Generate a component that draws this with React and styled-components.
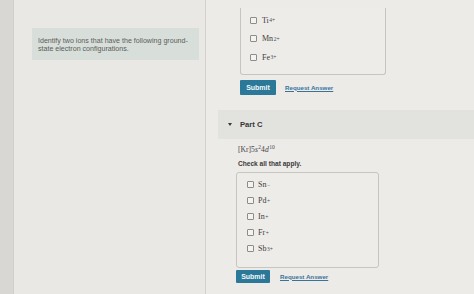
import React from "react";
import styled, { createGlobalStyle } from "styled-components";

const GlobalStyle = createGlobalStyle`
  html, body {
    margin: 0;
    padding: 0;
    width: 474px;
    height: 294px;
    overflow: hidden;
    background: #ecebe8;
  }
`;

const Page = styled.div`
  display: flex;
  width: 474px;
  height: 294px;
  font-family: "Liberation Sans", Arial, sans-serif;
`;

const Strip = styled.div`
  width: 13px;
  background: #d8d7d3;
  border-right: 1px solid #d0cfcb;
`;

const LeftPanel = styled.div`
  width: 167px;
  padding: 28px 6px 0 18px;
  background: #e9e8e4;
`;

const Prompt = styled.div`
  background: #d8dfda;
  padding: 9px 6px 6px 6px;
  height: 17px;
  font-size: 7.1px;
  line-height: 8px;
  color: #5b5c5b;
`;

const RightPanel = styled.div`
  flex: 1;
  border-left: 1px solid #d2d1cd;
  background: #ecebe8;
`;

const Section = styled.div`
  padding-left: ${(p) => p.indent}px;
  padding-top: ${(p) => p.top || 0}px;
`;

const AnswerBox = styled.div`
  width: ${(p) => p.width}px;
  margin-left: ${(p) => p.shift || 0}px;
  margin-top: ${(p) => p.top || 0}px;
  padding: ${(p) => p.pad};
  border: 1px solid #c6c5c1;
  border-top: ${(p) => (p.cut ? "none" : "1px solid #c6c5c1")};
  border-radius: ${(p) => (p.cut ? "0 0 3px 3px" : "3px")};
  box-sizing: border-box;
  background: #edece9;
`;

const Item = styled.div`
  display: flex;
  align-items: center;
  height: ${(p) => p.h}px;
  padding-left: ${(p) => p.inset}px;
  font-family: "Liberation Serif", "Times New Roman", serif;
  font-size: 8px;
  color: #3d3d3d;
`;

const Check = styled.span`
  width: 5px;
  height: 5px;
  border: 1px solid #8c8c8a;
  border-radius: 1px;
  background: #f3f3f1;
  margin-right: ${(p) => p.gap}px;
`;

const Sup = styled.sup`
  font-size: 5.5px;
  vertical-align: 3px;
  line-height: 0;
  margin-left: 0.5px;
  color: #4a4a4a;
`;

const Actions = styled.div`
  display: flex;
  align-items: center;
  margin-top: ${(p) => p.top}px;
  margin-left: ${(p) => p.shift || 0}px;
`;

const SubmitButton = styled.button`
  width: ${(p) => p.w}px;
  height: ${(p) => p.h}px;
  padding: 0;
  border: none;
  border-radius: 1px;
  background: #2b7898;
  color: #f4f8fa;
  font-family: "Liberation Sans", Arial, sans-serif;
  font-size: 7px;
  font-weight: bold;
`;

const RequestLink = styled.a`
  margin-left: ${(p) => p.gap}px;
  font-size: 6.2px;
  font-weight: bold;
  color: #3a739a;
  text-decoration: underline;
`;

const PartBar = styled.div`
  display: flex;
  align-items: center;
  height: 29px;
  margin: 15px 0 0 12px;
  padding-left: 10px;
  background: #e2e2df;
  font-size: 7.6px;
  font-weight: bold;
  color: #363636;
`;

const Caret = styled.span`
  width: 0;
  height: 0;
  border-left: 2.5px solid transparent;
  border-right: 2.5px solid transparent;
  border-top: 3px solid #3a3a3a;
  margin-right: 8px;
`;

const Formula = styled.div`
  margin-top: 6px;
  height: 9px;
  font-family: "Liberation Serif", "Times New Roman", serif;
  font-size: 7.6px;
  line-height: 9px;
  color: #444;
`;

const Instruction = styled.div`
  margin-top: 6px;
  font-size: 6.6px;
  font-weight: bold;
  color: #3a3a3a;
`;

const partB = [
  ["Ti", "4+"],
  ["Mn", "2+"],
  ["Fe", "3+"],
];

const partC = [
  ["Sn", "−"],
  ["Pd", "+"],
  ["In", "+"],
  ["Fr", "+"],
  ["Sb", "3+"],
];

export default function App() {
  return (
    <Page>
      <GlobalStyle />
      <Strip />
      <LeftPanel>
        <Prompt>
          Identify two ions that have the following ground-state electron
          configurations.
        </Prompt>
      </LeftPanel>
      <RightPanel>
        <Section indent={34} top={8}>
          <AnswerBox width={146} pad="3px 0 7px 0" cut>
            {partB.map(([el, ch]) => (
              <Item key={el} h={18.5} inset={9}>
                <Check gap={5} />
                {el}
                <Sup>{ch}</Sup>
              </Item>
            ))}
          </AnswerBox>
          <Actions top={5}>
            <SubmitButton w={36} h={15}>
              Submit
            </SubmitButton>
            <RequestLink gap={9}>Request Answer</RequestLink>
          </Actions>
        </Section>
        <PartBar>
          <Caret />
          Part C
        </PartBar>
        <Section indent={32}>
          <Formula>
            [Kr]5<i>s</i>
            <Sup>2</Sup>4<i>d</i>
            <Sup>10</Sup>
          </Formula>
          <Instruction>Check all that apply.</Instruction>
          <AnswerBox width={143} shift={-2} top={5} pad="4px 0 10px 0">
            {partC.map(([el, ch]) => (
              <Item key={el} h={16} inset={10}>
                <Check gap={4} />
                {el}
                <Sup>{ch}</Sup>
              </Item>
            ))}
          </AnswerBox>
          <Actions top={2} shift={-2}>
            <SubmitButton w={34} h={13}>
              Submit
            </SubmitButton>
            <RequestLink gap={10}>Request Answer</RequestLink>
          </Actions>
        </Section>
      </RightPanel>
    </Page>
  );
}
